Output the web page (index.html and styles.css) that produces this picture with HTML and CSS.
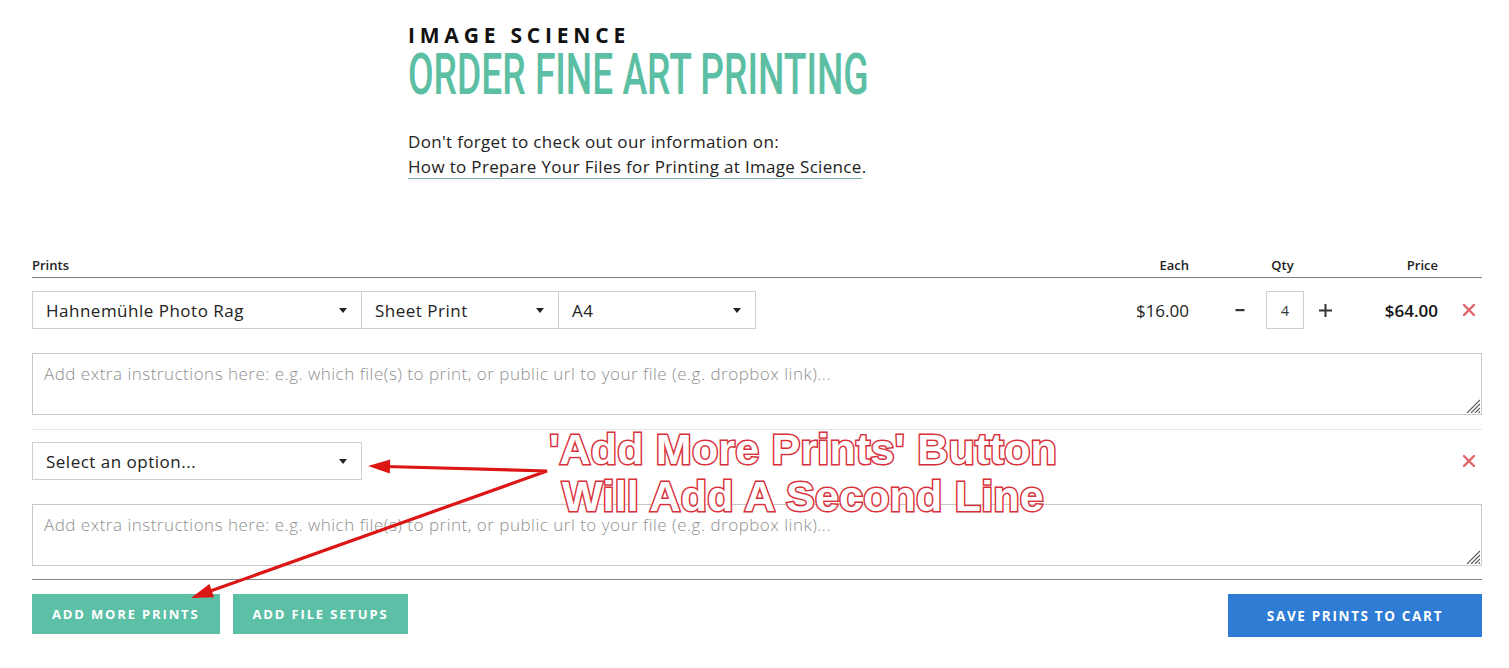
FILE: index.html
```html
<!DOCTYPE html>
<html lang="en">
<head>
<meta charset="utf-8">
<title>Order Fine Art Printing</title>
<link rel="stylesheet" href="styles.css">
</head>
<body>
<div class="page">
  <header class="intro">
    <div class="brand">IMAGE SCIENCE</div>
    <h1 class="title"><span>ORDER FINE ART PRINTING</span></h1>
    <p class="note">Don't forget to check out our information on:<br><a href="#">How to Prepare Your Files for Printing at Image Science</a>.</p>
  </header>

  <section class="order">
    <div class="grid thead">
      <div>Prints</div>
      <div class="r">Each</div>
      <div class="c">Qty</div>
      <div class="r">Price</div>
      <div></div>
    </div>

    <div class="item">
      <div class="grid line">
        <div class="selects">
          <div class="select w1"><span>Hahnemühle Photo Rag</span><i class="caret"></i></div>
          <div class="select w2"><span>Sheet Print</span><i class="caret"></i></div>
          <div class="select w2"><span>A4</span><i class="caret"></i></div>
        </div>
        <div class="each r">$16.00</div>
        <div class="qty">
          <span class="minus"><svg width="10" height="10" viewBox="0 0 10 10"><rect x="0.5" y="4" width="9" height="2.2" fill="#333"/></svg></span>
          <span class="qbox">4</span>
          <span class="plus"><svg width="13" height="13" viewBox="0 0 13 13"><rect x="0" y="5.5" width="13" height="2" fill="#333"/><rect x="5.5" y="0" width="2" height="13" fill="#333"/></svg></span>
        </div>
        <div class="price r">$64.00</div>
        <div class="del"><svg width="12" height="12" viewBox="0 0 12 12"><path d="M1 1L11 11M11 1L1 11" stroke="#e0676a" stroke-width="2.4" stroke-linecap="square"/></svg></div>
      </div>
      <div class="notes">
        <textarea placeholder="Add extra instructions here: e.g. which file(s) to print, or public url to your file (e.g. dropbox link)..."></textarea>
        <svg class="grip" width="14" height="14" viewBox="0 0 14 14"><path d="M14 1L1 14M14 5L5 14M14 9L9 14M14 12.5L12.5 14" stroke="#555" stroke-width="1.1"/></svg>
      </div>
    </div>

    <div class="item last">
      <div class="grid line">
        <div class="selects">
          <div class="select w1"><span>Select an option...</span><i class="caret"></i></div>
        </div>
        <div></div>
        <div></div>
        <div></div>
        <div class="del"><svg width="12" height="12" viewBox="0 0 12 12"><path d="M1 1L11 11M11 1L1 11" stroke="#e0676a" stroke-width="2.4" stroke-linecap="square"/></svg></div>
      </div>
      <div class="notes">
        <textarea placeholder="Add extra instructions here: e.g. which file(s) to print, or public url to your file (e.g. dropbox link)..."></textarea>
        <svg class="grip" width="14" height="14" viewBox="0 0 14 14"><path d="M14 1L1 14M14 5L5 14M14 9L9 14M14 12.5L12.5 14" stroke="#555" stroke-width="1.1"/></svg>
      </div>
    </div>

    <div class="actions">
      <button class="btn teal">ADD MORE PRINTS</button>
      <button class="btn teal">ADD FILE SETUPS</button>
      <button class="btn save">SAVE PRINTS TO CART</button>
    </div>
  </section>

  <svg class="arrows" width="1509" height="668" viewBox="0 0 1509 668">
    <polyline points="386,466.5 547,471 209,591.6" fill="none" stroke="#dc1515" stroke-width="3.2" stroke-linejoin="miter"/>
    <polygon points="368,466 390.2,459.6 389.8,473.6" fill="#dc1515"/>
    <polygon points="191,598 209.4,584.0 214.1,597.2" fill="#dc1515"/>
  </svg>

  <div class="annot">'Add More Prints' Button<br>Will Add A Second Line</div>
</div>
</body>
</html>
```

FILE: styles.css
```css
* { box-sizing: border-box; }

body {
  margin: 0;
  background: #fff;
  color: #222;
  font-family: "Open Sans", "Liberation Sans", sans-serif;
}

.page {
  position: relative;
  width: 1509px;
  height: 668px;
  overflow: hidden;
  padding: 0 27px 0 32px;
}

/* header */
.intro {
  margin-left: 376px;
  padding-top: 23px;
}

.brand {
  font-size: 21px;
  font-weight: 700;
  line-height: 24px;
  letter-spacing: 4.8px;
  color: #111;
}

.title {
  margin: 3px 0 0;
  font-family: Roboto, "Liberation Sans", sans-serif;
  font-weight: 500;
  font-size: 57px;
  line-height: 50px;
  color: #5cbfa4;
  white-space: nowrap;
}

.title span {
  display: inline-block;
  transform: scaleX(0.652);
  transform-origin: left center;
}

.note {
  margin: 29px 0 0;
  font-size: 17px;
  line-height: 25px;
  letter-spacing: 0.33px;
  color: #222;
}

.note a {
  color: inherit;
  text-decoration: none;
  border-bottom: 1px solid #7aaeae;
}

/* order table */
.order {
  margin-top: 76px;
}

.grid {
  display: grid;
  grid-template-columns: 1fr 100px 187px 62px 44px;
  align-items: center;
}

.r { text-align: right; }
.c { text-align: center; }

.thead {
  height: 23px;
  padding-bottom: 3px;
  font-size: 13px;
  font-weight: 600;
  line-height: 20px;
  border-bottom: 1px solid #808080;
}

.item {
  padding: 13px 0 14px;
  border-bottom: 1px solid #e6e6e6;
}

.item.last {
  padding: 12px 0 13px;
  border-bottom-color: #858585;
}

.line {
  height: 38px;
}

.selects {
  display: flex;
}

.select {
  display: flex;
  align-items: center;
  justify-content: space-between;
  height: 38px;
  padding: 0 14px 0 13px;
  border: 1px solid #cfcfcf;
  font-size: 17px;
  letter-spacing: 0.5px;
  color: #222;
}

.select + .select { margin-left: -1px; }

.w1 { width: 330px; }
.w2 { width: 198px; }

.caret {
  width: 0;
  height: 0;
  border-left: 4px solid transparent;
  border-right: 4px solid transparent;
  border-top: 5px solid #222;
}

.each {
  font-size: 17px;
  font-weight: 400;
  color: #222;
}

.qty {
  display: flex;
  align-items: center;
  justify-content: center;
}

.minus,
.plus {
  display: flex;
  align-items: center;
  justify-content: center;
  width: 20px;
  height: 20px;
}

.minus { margin-right: 16px; }
.plus { margin-left: 11px; }

.qbox {
  display: flex;
  align-items: center;
  justify-content: center;
  width: 38px;
  height: 38px;
  border: 1px solid #cfcfcf;
  font-size: 14px;
  font-weight: 400;
  color: #333;
}

.price {
  font-size: 17px;
  font-weight: 600;
  color: #111;
}

.del {
  display: flex;
  justify-content: flex-end;
  padding-right: 7px;
}

.notes {
  position: relative;
  margin-top: 24px;
}

.notes textarea {
  display: block;
  width: 100%;
  height: 62px;
  padding: 9px 11px;
  border: 1px solid #c8c8c8;
  resize: none;
  font-family: "Open Sans", "Liberation Sans", sans-serif;
  font-size: 17px;
  font-weight: 300;
  letter-spacing: 0.5px;
  line-height: 22px;
  color: #333;
  background: #fff;
}

.notes textarea::placeholder {
  color: #8f8f8f;
}

.grip {
  position: absolute;
  right: 2px;
  bottom: 2px;
}

/* actions */
.actions {
  display: flex;
  align-items: flex-start;
  gap: 13px;
  padding-top: 14px;
}

.btn {
  height: 40px;
  padding: 0 20px;
  border: 0;
  border-radius: 0;
  font-family: "Open Sans", "Liberation Sans", sans-serif;
  font-size: 13px;
  font-weight: 700;
  letter-spacing: 1.85px;
  color: #fff;
  cursor: pointer;
}

.teal { background: #5cc0a6; }

.save {
  margin-left: auto;
  height: 43px;
  width: 254px;
  padding: 0;
  background: #2e7cd4;
  font-size: 13.5px;
  letter-spacing: 1.65px;
}

/* annotation overlay */
.arrows {
  position: absolute;
  left: 0;
  top: 0;
  pointer-events: none;
}

.annot {
  position: absolute;
  left: 503px;
  top: 426px;
  width: 600px;
  text-align: center;
  font-family: "Liberation Sans", Arial, sans-serif;
  font-weight: 700;
  font-size: 43px;
  line-height: 47px;
  letter-spacing: 0.2px;
  color: #fff;
  -webkit-text-stroke: 3px #d8303a;
  paint-order: stroke fill;
  pointer-events: none;
}
```
